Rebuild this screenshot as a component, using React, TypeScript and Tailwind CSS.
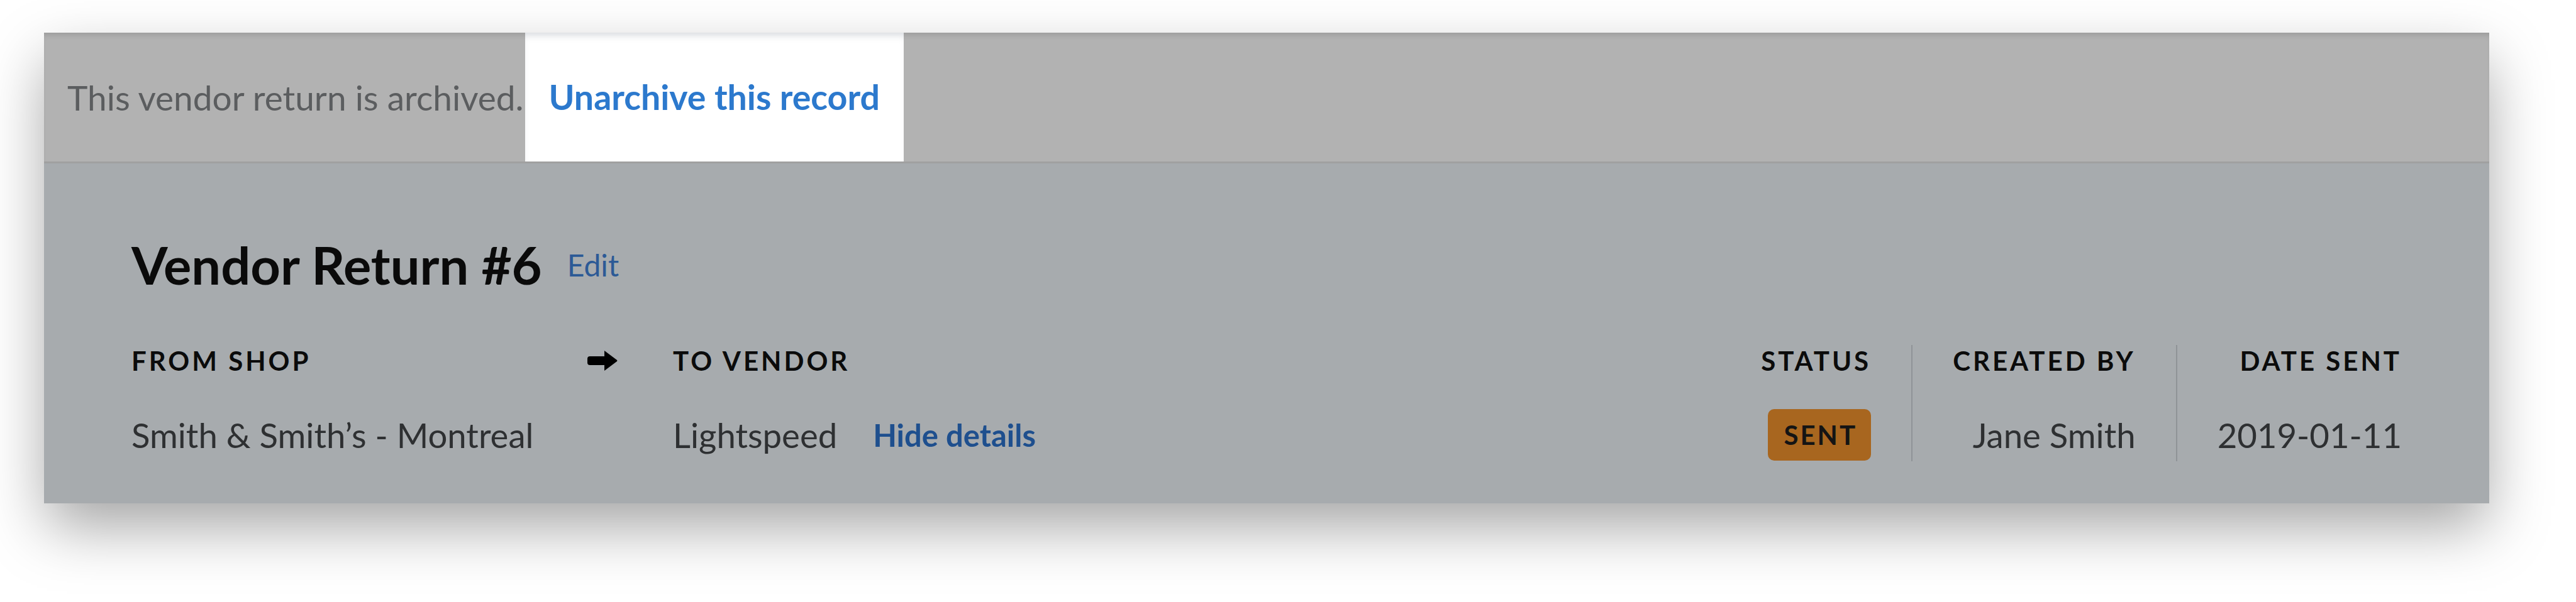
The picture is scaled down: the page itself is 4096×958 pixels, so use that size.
import { FunctionComponent } from "react";

const ArrowIcon = () => (
  <svg width="48" height="34" viewBox="0 0 48 34" className="shrink-0">
    <rect x="0" y="10" width="30" height="14" rx="4" fill="#000" />
    <path d="M27 1 L47 16 Q48 17 47 18 L27 33 Z" fill="#000" strokeLinejoin="round" />
  </svg>
);

const rightColumns = [
  { label: "CREATED BY", value: "Jane Smith" },
  { label: "DATE SENT", value: "2019-01-11" },
];

const App: FunctionComponent = () => {
  return (
    <div
      className="h-[958px] w-[4096px] bg-white pt-[52px] pl-[70px]"
      style={{ fontFamily: "Lato, 'Open Sans', sans-serif" }}
    >
      <div className="w-[3888px] shadow-[0_40px_90px_-4px_rgba(0,0,0,0.36)]">
        {/* archived banner */}
        <div className="flex h-[208px] items-stretch border-b-[3px] border-[#a0a0a0] bg-[#b2b2b2] shadow-[inset_0_8px_10px_-5px_rgba(0,0,0,0.15)]">
          <span className="flex items-center pl-[37px] text-[55px] leading-[1.2] text-[#5b5d5f]">
            This vendor return is archived.
          </span>
          <div className="ml-[2px] flex items-center bg-white px-[38px] shadow-[inset_0_10px_12px_-6px_rgba(120,130,145,0.3)]">
            <span className="text-[55.5px] font-bold leading-[1.2] text-[#2c79cd]">
              Unarchive this record
            </span>
          </div>
        </div>

        {/* header */}
        <div className="bg-[#a7abae] px-[139px] pt-[112px] pb-[67px]">
          <div className="flex items-center gap-[40px]">
            <h1 className="text-[83px] font-bold leading-[1.2] text-[#0a0a0a]">
              Vendor Return #6
            </h1>
            <span className="text-[48px] leading-[1.2] text-[#2c5a96]">Edit</span>
          </div>

          <div className="mt-[77px] flex justify-between">
            <div className="flex">
              <div className="flex w-[725px] flex-col gap-[52px]">
                <span className="text-[42px] font-bold leading-[1.2] tracking-[4px] text-[#0b0b0b]">
                  FROM SHOP
                </span>
                <div className="flex h-[83px] items-center">
                  <span className="text-[54.5px] leading-[1.2] text-[#2e3032]">
                    Smith &amp; Smith’s - Montreal
                  </span>
                </div>
              </div>
              <div className="flex h-[50px] items-center">
                <ArrowIcon />
              </div>
              <div className="ml-[88px] flex flex-col gap-[52px]">
                <span className="text-[42px] font-bold leading-[1.2] tracking-[4px] text-[#0b0b0b]">
                  TO VENDOR
                </span>
                <div className="flex h-[83px] items-center gap-[57px]">
                  <span className="text-[54.5px] leading-[1.2] text-[#2e3032]">Lightspeed</span>
                  <span className="text-[49px] font-bold leading-[1.2] text-[#1e4f8e]">
                    Hide details
                  </span>
                </div>
              </div>
            </div>

            <div className="flex">
              <div className="flex flex-col items-end gap-[52px] pr-[64px]">
                <span className="text-[42px] font-bold leading-[1.2] tracking-[4px] text-[#0b0b0b]">
                  STATUS
                </span>
                <div className="flex h-[83px] items-center">
                  <span className="flex h-[82px] items-center rounded-[10px] bg-[#a8661f] pr-[22px] pl-[25px] text-[42px] font-bold leading-[1.2] tracking-[3px] text-[#141414]">
                    SENT
                  </span>
                </div>
              </div>
              {rightColumns.map((col, index) => (
                <div
                  key={index}
                  className={
                    index === rightColumns.length - 1
                      ? "flex flex-col items-end gap-[52px] border-l-2 border-[#8f9397] pl-[64px]"
                      : "flex flex-col items-end gap-[52px] border-l-2 border-[#8f9397] px-[64px]"
                  }
                >
                  <span className="text-[42px] font-bold leading-[1.2] tracking-[4px] text-[#0b0b0b]">
                    {col.label}
                  </span>
                  <div className="flex h-[83px] items-center">
                    <span className="text-[54.5px] leading-[1.2] text-[#2e3032]">{col.value}</span>
                  </div>
                </div>
              ))}
            </div>
          </div>
        </div>
      </div>
    </div>
  );
};

export default App;
